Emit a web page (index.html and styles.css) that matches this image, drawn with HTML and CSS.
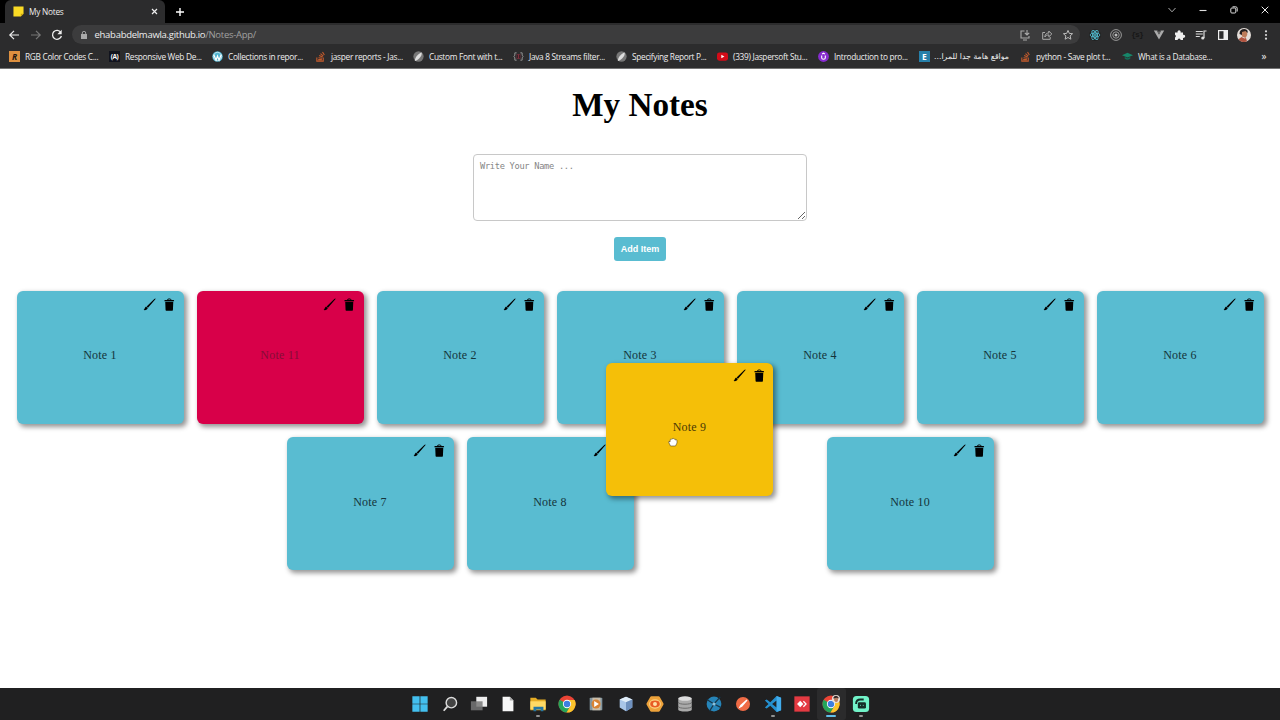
FILE: index.html
```html
<!DOCTYPE html>
<html lang="en">
<head>
<meta charset="utf-8">
<title>My Notes</title>
<link rel="stylesheet" href="styles.css">
</head>
<body>
<svg class="sprite" xmlns="http://www.w3.org/2000/svg">
  <symbol id="brush" viewBox="0 0 14 14"><path d="M13.3.5c.4.3.1.7-.2 1.1L5.400 10.500 3.900 9.200 12.200 1.100c.4-.4.7-.8 1.100-.6zM3.500 9.500l1.500 1.300c-.1 1.800-2.200 2.800-4.500 2.200 1.500-.6 1.200-3.500 3-3.500z"/></symbol>
  <symbol id="trash" viewBox="0 0 12 14"><path d="M1.400 3.900h9.200l-.4 9.300c0 .5-.3.800-.8.800H2.600c-.5 0-.8-.3-.8-.8z"/><path d="M3.500 2.200Q4 .6 6 .6t2.500 1.600" fill="none" stroke="#000" stroke-width="1.100"/><path d="M1.200 1.900h9.600q.8.100.8 1.300H.4q0-1.200.8-1.300z"/></symbol>
  <symbol id="feather" viewBox="0 0 12 12"><circle cx="6" cy="6" r="5.600" fill="#777"/><path d="M2 11C2 7 5 3 9.500 1.500 10 5 7 9 2 11z" fill="#ddd"/></symbol>
  <symbol id="stack" viewBox="0 0 12 12"><path d="M2 7v4h7V7M3.500 9.400h4M3.800 7.300l4 .6M4.500 5l3.800 1.600M6 2.800l3 2.700M8.200 1l2 3.300" fill="none" stroke="#c45b2c" stroke-width="1.200"/></symbol>
  <symbol id="chrome" viewBox="0 0 20 20"><circle cx="10" cy="10" r="9.500" fill="#eb4435"/><path d="M1.800 5.200A9.500 9.500 0 0 0 9.500 19.500L14 12.300 10 10z" fill="#24a55a"/><path d="M10 5.600h8.500A9.500 9.500 0 0 1 9.500 19.500L14 12z" fill="#fbc42c"/><circle cx="10" cy="10" r="4.600" fill="#fff"/><circle cx="10" cy="10" r="3.600" fill="#3d7fe0"/></symbol>
</svg>

<header class="browser">
  <div class="tabs">
    <div class="tab">
      <svg class="tab-icon" viewBox="0 0 12 12"><path d="M.5.500h11v8l-3 3h-8z" fill="#fadb25"/><path d="M11.500 8.500l-3 3v-3z" fill="#c29b10"/></svg>
      <span class="tab-title">My Notes</span>
      <svg class="tab-close" viewBox="0 0 7 7"><path d="M1 1l5 5M6 1L1 6" stroke="#eee" stroke-width="1.200"/></svg>
    </div>
    <svg class="new-tab" viewBox="0 0 8 8"><path d="M4 0v8M0 4h8" stroke="#fff" stroke-width="1.400"/></svg>
    <div class="window-controls">
      <svg viewBox="0 0 10 10"><path d="M1.500 3L5 6.800 8.500 3" fill="none" stroke="#aaa"/></svg>
      <svg viewBox="0 0 10 10"><path d="M1.500 5.500h7" stroke="#ddd" stroke-width="1.100"/></svg>
      <svg viewBox="0 0 10 10"><rect x="1.800" y="3" width="5" height="5" rx="1" fill="none" stroke="#ddd"/><path d="M3.500 1.800h3.200q1.500 0 1.500 1.500v3.200" fill="none" stroke="#ddd"/></svg>
      <svg viewBox="0 0 10 10"><path d="M1.700 1.700l6.600 6.600M8.300 1.700L1.700 8.300" stroke="#eee"/></svg>
    </div>
  </div>

  <div class="toolbar">
    <div class="nav">
      <svg viewBox="0 0 12 12"><path d="M11 6H2M6 1.800L1.800 6 6 10.200" fill="none" stroke="#eee" stroke-width="1.200"/></svg>
      <svg viewBox="0 0 12 12"><path d="M1 6h9M6 1.800L10.200 6 6 10.200" fill="none" stroke="#777" stroke-width="1.200"/></svg>
      <svg viewBox="0 0 12 12"><path d="M9.800 3.300A4.500 4.500 0 1 0 10.400 7" fill="none" stroke="#eee" stroke-width="1.300"/><path d="M10.700.8v4.400H6.300z" fill="#eee"/></svg>
    </div>
    <div class="address">
      <svg class="lock" viewBox="0 0 6 8"><path d="M0 3h6v5H0z" fill="#aaa"/><path d="M1.300 3.200V2a1.700 1.700 0 0 1 3.400 0v1.200" fill="none" stroke="#aaa" stroke-width=".9"/></svg>
      <span class="url">ehababdelmawla.github.io<span class="path">/Notes-App/</span></span>
      <div class="address-actions">
        <svg viewBox="0 0 12 12"><path d="M5.500 2H2v7h8V7M4 11h4M8 1v4.800M5.800 3.800L8 6l2.200-2.200" fill="none" stroke="#aaa" stroke-width="1.100"/></svg>
        <svg viewBox="0 0 12 12"><path d="M4 3.500H1.700v6.800h7.500V8M3.800 8c.3-3 2-4 4-4V2l3 3-3 2.800V5.900c-1.600 0-3 .6-4 2.100z" fill="none" stroke="#aaa"/></svg>
        <svg viewBox="0 0 12 12"><path d="M6 1.400l1.300 3 3.300.3-2.500 2.200.8 3.300L6 8.500l-2.900 1.700.8-3.300L1.400 4.700l3.300-.3z" fill="none" stroke="#bbb"/></svg>
      </div>
    </div>
    <div class="extensions">
      <svg viewBox="0 0 12 12"><circle cx="6" cy="6" r="6" fill="#222"/><g fill="none" stroke="#51b7c9" stroke-width=".9"><ellipse cx="6" cy="6" rx="5" ry="2"/><ellipse cx="6" cy="6" rx="5" ry="2" transform="rotate(60 6 6)"/><ellipse cx="6" cy="6" rx="5" ry="2" transform="rotate(120 6 6)"/></g><circle cx="6" cy="6" r="1" fill="#51b7c9"/></svg>
      <svg viewBox="0 0 12 12"><g fill="none" stroke="#999"><circle cx="6" cy="6" r="5.400"/><circle cx="6" cy="6" r="3.200"/></g><circle cx="6" cy="6" r="1.500" fill="#bbb"/></svg>
      <span class="braces">{s}</span>
      <svg viewBox="0 0 12 12"><path d="M.8 1.500h3L6 5.600l2.200-4.100h3L6 10.600z" fill="#aaa"/><path d="M3.800 1.500L6 5.600l2.200-4.100H7L6 3.200 5 1.500z" fill="#666"/></svg>
      <svg viewBox="0 0 12 12"><path d="M1 3.500h2.600a1.600 1.600 0 1 1 3 0H9v2.300a1.600 1.600 0 1 1 0 3V11H6.600a1.500 1.500 0 1 0-3 0H1V8.500a1.500 1.500 0 0 0 0-2.700z" fill="#eee"/></svg>
      <svg viewBox="0 0 12 12"><path d="M.8 2.500h7M.8 5h7M.8 7.500h4M9 9V2h2.500" fill="none" stroke="#ddd" stroke-width="1.200"/><circle cx="7.800" cy="9" r="1.600" fill="#ddd"/></svg>
      <svg viewBox="0 0 12 12"><rect x="1.600" y="1.600" width="8.800" height="8.800" fill="none" stroke="#eee" stroke-width="1.200"/><path d="M6.500 1h4.500v10H6.500z" fill="#eee"/></svg>
      <svg class="avatar" viewBox="0 0 14 14"><circle cx="7" cy="7" r="7" fill="#e4ddd8"/><path d="M4 4q2-3 5-1.500 2 1.500 1.200 4.500L8.500 10 5 8.500z" fill="#bd7c5a"/><path d="M2.500 6q0-5 5-5 4 .5 3 4L8.500 3 5 4v3z" fill="#252020"/><path d="M1.500 11.200L4.500 9l3 1.500L9 10l1 3.200A7 7 0 0 1 1.500 11.200z" fill="#b0533f"/></svg>
      <svg viewBox="0 0 12 12"><g fill="#ddd"><circle cx="6" cy="2.300" r="1.100"/><circle cx="6" cy="6" r="1.100"/><circle cx="6" cy="9.700" r="1.100"/></g></svg>
    </div>
  </div>

  <nav class="bookmarks">
    <a><svg viewBox="0 0 12 12"><path d="M0 0h12v12H0z" fill="#dd9040"/></svg><b class="glyph dark">R</b><span>RGB Color Codes C...</span></a>
    <a><svg viewBox="0 0 12 12"><path d="M0 0h12v12H0z" fill="#11131d"/></svg><b class="glyph tiny">(A)</b><span>Responsive Web De...</span></a>
    <a><svg viewBox="0 0 12 12"><circle cx="6" cy="6" r="5.700" fill="#4eb3cf"/><circle cx="6" cy="6" r="4.500" fill="none" stroke="#e5f6fa" stroke-width=".8"/><path d="M2 4l2.400 6L6 5.500 7.700 10 10 4" fill="none" stroke="#fff" stroke-width="1.300"/></svg><span>Collections in repor...</span></a>
    <a><svg><use href="#stack"/></svg><span>jasper reports - Jas...</span></a>
    <a><svg><use href="#feather"/></svg><span>Custom Font with t...</span></a>
    <a><svg viewBox="0 0 12 12"><path d="M4 2H2v2.500L1 6l1 1.500V10h2M8 2h2v2.500L11 6l-1 1.500V10H8" fill="none" stroke="#999"/><path d="M4 3.500h4v5H4z" fill="#8d3544"/><path d="M5 4v4M7 4v4" stroke="#281e22"/></svg><span>Java 8 Streams filter...</span></a>
    <a><svg><use href="#feather"/></svg><span>Specifying Report P...</span></a>
    <a><svg viewBox="0 0 12 12"><rect y="1.500" width="12" height="9" rx="2.500" fill="#d40b18"/><path d="M4.700 4l3.400 2-3.400 2z" fill="#fff"/></svg><span>(339) Jaspersoft Stu...</span></a>
    <a><svg viewBox="0 0 12 12"><circle cx="6" cy="6" r="5.900" fill="#872bd0"/><path d="M4 4.800v2.500q0 1.700 2 1.700t2-1.700V4.800M4.500 3.200L6 2.400l1.500.8" fill="none" stroke="#fff" stroke-width="1.200"/></svg><span>Introduction to pro...</span></a>
    <a><svg viewBox="0 0 12 12"><path d="M0 0h12v12H0z" fill="#267fa9"/></svg><b class="glyph">E</b><span class="arabic" dir="rtl" lang="ar">مواقع هامة جدا للمرا...</span></a>
    <a><svg><use href="#stack"/></svg><span>python - Save plot t...</span></a>
    <a><svg viewBox="0 0 12 12"><path d="M0 4.500L6 2l6 2.500L6 7z" fill="#17866a"/><path d="M3 6.500l3 1.300 3-1.300v2Q6 10.500 3 8.500z" fill="#126c57"/></svg><span>What is a Database...</span></a>
    <span class="more">»</span>
  </nav>
</header>

<main class="page">
  <h1>My Notes</h1>
  <textarea class="note-input" placeholder="Write Your Name ..."></textarea>
  <button class="add">Add Item</button>
  <section class="notes">
    <article class="note"><div class="tools"><svg><use href="#brush"/></svg><svg><use href="#trash"/></svg></div><p>Note 1</p></article>
    <article class="note red"><div class="tools"><svg><use href="#brush"/></svg><svg><use href="#trash"/></svg></div><p>Note 11</p></article>
    <article class="note"><div class="tools"><svg><use href="#brush"/></svg><svg><use href="#trash"/></svg></div><p>Note 2</p></article>
    <article class="note"><div class="tools"><svg><use href="#brush"/></svg><svg><use href="#trash"/></svg></div><p>Note 3</p></article>
    <article class="note"><div class="tools"><svg><use href="#brush"/></svg><svg><use href="#trash"/></svg></div><p>Note 4</p></article>
    <article class="note"><div class="tools"><svg><use href="#brush"/></svg><svg><use href="#trash"/></svg></div><p>Note 5</p></article>
    <article class="note"><div class="tools"><svg><use href="#brush"/></svg><svg><use href="#trash"/></svg></div><p>Note 6</p></article>
    <article class="note lower"><div class="tools"><svg><use href="#brush"/></svg><svg><use href="#trash"/></svg></div><p>Note 7</p></article>
    <article class="note lower"><div class="tools"><svg><use href="#brush"/></svg><svg><use href="#trash"/></svg></div><p>Note 8</p></article>
    <article class="note yellow dragging"><div class="tools"><svg><use href="#brush"/></svg><svg><use href="#trash"/></svg></div><p>Note 9</p>
      <svg class="cursor" viewBox="0 0 10 10"><path d="M2 5L1 4.200Q.3 5 1 6l1.500 3h5L9 6V3.200q-.6-.8-1.200 0Q7.500 1.500 6.500 2.200 5.700.8 5 2 3.800 1 3.500 2.300 2.200 1.700 2.200 3z" fill="#fff" stroke="#554522" stroke-width=".6"/></svg></article>
    <article class="note lower"><div class="tools"><svg><use href="#brush"/></svg><svg><use href="#trash"/></svg></div><p>Note 10</p></article>
  </section>
</main>

<footer class="taskbar">
  <span><svg viewBox="0 0 20 20"><path d="M1.500 1.500h8.100v8.100H1.500zM10.400 1.500h8.100v8.100h-8.100zM1.500 10.400h8.100v8.100H1.500zM10.400 10.400h8.100v8.100h-8.100z" fill="#43bfee"/></svg></span>
  <span><svg viewBox="0 0 20 20"><circle cx="11.500" cy="8.500" r="5.800" fill="#444" stroke="#ddd" stroke-width="1.600"/><path d="M7 13l-4 4.500" stroke="#ddd" stroke-width="2"/></svg></span>
  <span><svg viewBox="0 0 20 20"><path d="M7 2h12v11H7z" fill="#eee"/><path d="M1 7h13v10H1z" fill="#777" opacity=".85"/></svg></span>
  <span><svg viewBox="0 0 20 20"><path d="M4 2h8l4 4v12H4z" fill="#f7f7f7"/><path d="M12 2v4h4z" fill="#aaa"/></svg></span>
  <span class="open"><svg viewBox="0 0 20 20"><path d="M1.500 3h6l2 2h9v12h-17z" fill="#e6ad25"/><path d="M1.500 7h17v9h-17z" fill="#ffda65"/><path d="M5 18v-5h11v5h-3v-2H8v2z" fill="#2577a4"/></svg></span>
  <span><svg><use href="#chrome"/></svg></span>
  <span><svg viewBox="0 0 20 20"><rect x="3" y="3" width="14" height="14" rx="1" fill="#8396a0"/><path d="M6 3h9v14H6z" fill="#c9bda9"/><circle cx="10" cy="10" r="5" fill="#d98233"/><path d="M8 6.800l5.200 3.200L8 13.200z" fill="#fff"/></svg></span>
  <span><svg viewBox="0 0 20 20"><path d="M10 2l7 3v9l-7 4-7-4V5z" fill="#a9c6e8"/><path d="M10 2l7 3-7 3-7-3z" fill="#e0edf8"/><path d="M10 8l7-3v9l-7 4z" fill="#6f91be"/></svg></span>
  <span><svg viewBox="0 0 20 20"><path d="M6 3h8l4 7-4 7H6l-4-7z" fill="#eda23a" stroke="#eda23a" stroke-width="3" stroke-linejoin="round"/><ellipse cx="10" cy="10" rx="6" ry="4.500" fill="#e85c25" stroke="#ffd182" stroke-width="1.300"/><circle cx="10" cy="10" r="2.200" fill="#ffe2a7"/></svg></span>
  <span><svg viewBox="0 0 20 20"><path d="M2.500 4v12c0 3 15 3 15 0V4z" fill="#aaa"/><ellipse cx="10" cy="4" rx="7.500" ry="2.500" fill="#ddd"/><path d="M2.500 8c0 3 15 3 15 0M2.500 12.500c0 3 15 3 15 0" fill="none" stroke="#666"/></svg></span>
  <span><svg viewBox="0 0 20 20"><circle cx="10" cy="10" r="8.200" fill="#2684b8"/><path d="M2 5l8 5 7-8M10 10L5 18M10 10l8 4" fill="none" stroke="#17364a" stroke-width="1.400"/><circle cx="10" cy="10" r="1.800" fill="#8bc0da"/></svg></span>
  <span><svg viewBox="0 0 20 20"><circle cx="10" cy="10" r="7.800" fill="#ef6b45"/><path d="M5 15l2-4 7-6 1 1-6 7z" fill="#fff"/></svg></span>
  <span class="open"><svg viewBox="0 0 20 20"><path d="M14 1l5 2v14l-5 2L7 12l-4 3-2-1 4-4-4-4 2-1 4 3z" fill="#2490d0"/><path d="M14 6v8l-5-4z" fill="#202225"/><path d="M14 1l5 2v14l-5 2z" fill="#42acec"/></svg></span>
  <span><svg viewBox="0 0 20 20"><path d="M1.500 1.500h17v17h-17z" fill="#e43a42"/><path d="M8 6.500l3.500 3.500L8 13.500 4.500 10z" fill="#fff"/><path d="M11 7.500l1-1 3.500 3.500-3.500 3.500-1-1 2.500-2.500z" fill="#fff"/></svg></span>
  <span class="active"><svg viewBox="0 0 20 20"><use href="#chrome"/><circle cx="15.500" cy="4.500" r="4.500" fill="#eadfd8"/><path d="M13.500 3.500q2-2.500 4.500 0l-.5 3.500-2 1-2-2z" fill="#b97e61"/><path d="M12.500 4q.5-3.500 4-3 2.500.5 2 3l-2-1-2.500.5z" fill="#382a28"/></svg></span>
  <span class="open"><svg viewBox="0 0 20 20"><rect x="1" y="1" width="18" height="18" rx="4" fill="#72f3c9"/><path d="M4.500 10q0-5 5-5H13" fill="none" stroke="#162e28" stroke-width="2"/><rect x="6.500" y="8" width="9" height="7" rx="1.500" fill="#162e28"/><path d="M9 11.500h1M12 11.500h1" stroke="#72f3c9"/></svg></span>
</footer>
</body>
</html>
```
FILE: styles.css
```css
* { box-sizing: border-box; }
body {
  margin: 0;
  width: 1280px;
  height: 720px;
  overflow: hidden;
  display: flex;
  flex-direction: column;
  background: #fff;
  font-family: "Liberation Serif", serif;
}
svg { display: block; flex: none; }
.sprite { display: none; }

.browser {
  height: 69px;
  flex: none;
  background: #2c2c2d;
  border-bottom: 1px solid #747474;
  color: #eee;
  font-family: "Open Sans", "Noto Sans", sans-serif;
}
.tabs { height: 23px; background: #000; display: flex; align-items: center; padding-left: 5px; }
.tab {
  width: 160px;
  height: 23px;
  background: #2c2c2d;
  border-radius: 6px 6px 0 0;
  display: flex;
  align-items: center;
  padding: 0 7px 0 8px;
}
.tab-icon { width: 11px; height: 11px; }
.tab-title { flex: 1; font-size: 8.300px; letter-spacing: -.26px; margin: -1px 0 0 5px; }
.tab-close { width: 7px; height: 7px; }
.new-tab { width: 8px; height: 8px; margin-left: 11px; }
.window-controls { display: flex; gap: 20.700px; margin-left: auto; padding: 0 10.500px 3px 0; }
.window-controls svg { width: 10px; height: 10px; }

.toolbar { height: 23px; display: flex; align-items: center; }
.nav { width: 72px; display: flex; gap: 9.500px; padding-left: 8px; }
.nav svg { width: 12px; height: 12px; }
.address {
  width: 1008px;
  height: 19px;
  border-radius: 10px;
  background: #3c3c3d;
  display: flex;
  align-items: center;
  padding: 0 6px 0 9px;
}
.lock { width: 6px; height: 8px; }
.url { font-size: 9.500px; letter-spacing: -.28px; margin-left: 7.500px; white-space: nowrap; }
.path { color: #a0a0a0; }
.address-actions { display: flex; gap: 9.500px; margin-left: auto; }
.address-actions svg { width: 12px; height: 12px; }
.extensions { flex: 1; display: flex; align-items: center; gap: 9.400px; padding-left: 8.500px; }
.extensions svg, .braces { width: 12px; height: 12px; flex: none; }
.extensions .avatar { width: 14px; height: 14px; margin: 0 -1px; }
.braces { color: #171717; font: bold 8px/12px "Liberation Mono", monospace; letter-spacing: -1px; }

.bookmarks {
  height: 20px;
  display: grid;
  grid-template-columns: 100px 103px 103px 98px 100px 103px 101px 101px 101px 101px 102px 139.500px 10px;
  align-items: center;
  padding-left: 9px;
}
.bookmarks a { display: flex; align-items: center; gap: 5px; font-size: 8.300px; letter-spacing: -.3px; white-space: nowrap; }
.bookmarks svg { width: 11px; height: 11px; }
.bookmarks .glyph { width: 11px; margin-left: -16px; text-align: center; color: #fff; font-size: 8.500px; line-height: 11px; letter-spacing: 0; }
.bookmarks .dark { color: #201711; font-style: italic; }
.bookmarks .tiny { font-size: 6.500px; letter-spacing: -.4px; }
.bookmarks .arabic { font-family: "DejaVu Sans", sans-serif; font-size: 7.800px; margin-left: -1px; }
.more { font-size: 10px; line-height: 12px; }

.page { flex: 1; display: flex; flex-direction: column; align-items: center; }
h1 { margin: 17px 0 0; font-size: 33.200px; line-height: 38px; color: #000; }
.note-input {
  width: 334px;
  height: 67px;
  margin: 30px 0 0;
  padding: 5px 6px;
  border: 1px solid #c8c8c8;
  border-radius: 4px;
  font: 8.700px/13px "DejaVu Sans Mono", monospace;
  letter-spacing: -.3px;
  flex: none;
}
.note-input::placeholder { color: #858585; }
.add {
  width: 52px;
  height: 24px;
  margin: 16px 0 0;
  padding: 0;
  border: 0;
  border-radius: 3px;
  background: #59bcd1;
  color: #fff;
  font: bold 9px "Liberation Sans", sans-serif;
}
.notes { width: 1280px; margin-top: 30px; display: flex; flex-wrap: wrap; justify-content: center; gap: 13.400px 13px; }
.note {
  width: 167px;
  height: 133px;
  border-radius: 6px;
  background: #59bcd1;
  box-shadow: 2.500px 2.500px 5px rgba(0, 0, 0, .42);
  position: relative;
  display: flex;
  flex-direction: column;
}
.tools { height: 26px; display: flex; justify-content: flex-end; align-items: center; gap: 8px; padding-right: 9px; }
.tools svg { width: 10.500px; height: 13px; }
.tools svg:first-child { width: 13px; }
.note p { margin: 30px 0 0; text-align: center; font-size: 12px; line-height: 16px; letter-spacing: .2px; color: #14343b; }
.lower p { margin-top: 31px; }
.red { background: #d80049; }
.red p { color: #850d36; }
.yellow { background: #f5bf08; }
.yellow p { color: #4b3a06; }
.dragging { left: -40.500px; top: -74.500px; z-index: 2; }
.cursor { position: absolute; left: 62px; top: 74px; width: 10px; height: 10px; }

.taskbar { height: 32px; flex: none; background: #202021; display: flex; justify-content: center; padding-left: 1px; }
.taskbar span { width: 29.370px; height: 32px; display: flex; align-items: center; justify-content: center; position: relative; }
.taskbar svg { width: 18px; height: 18px; }
.taskbar .open::after, .taskbar .active::after { content: ""; position: absolute; bottom: 3px; width: 4px; height: 2px; border-radius: 1px; background: #929292; }
.taskbar .active { background: #2b2b2c; border-radius: 3px; }
.taskbar .active::after { width: 10px; background: #60bfea; }
```
